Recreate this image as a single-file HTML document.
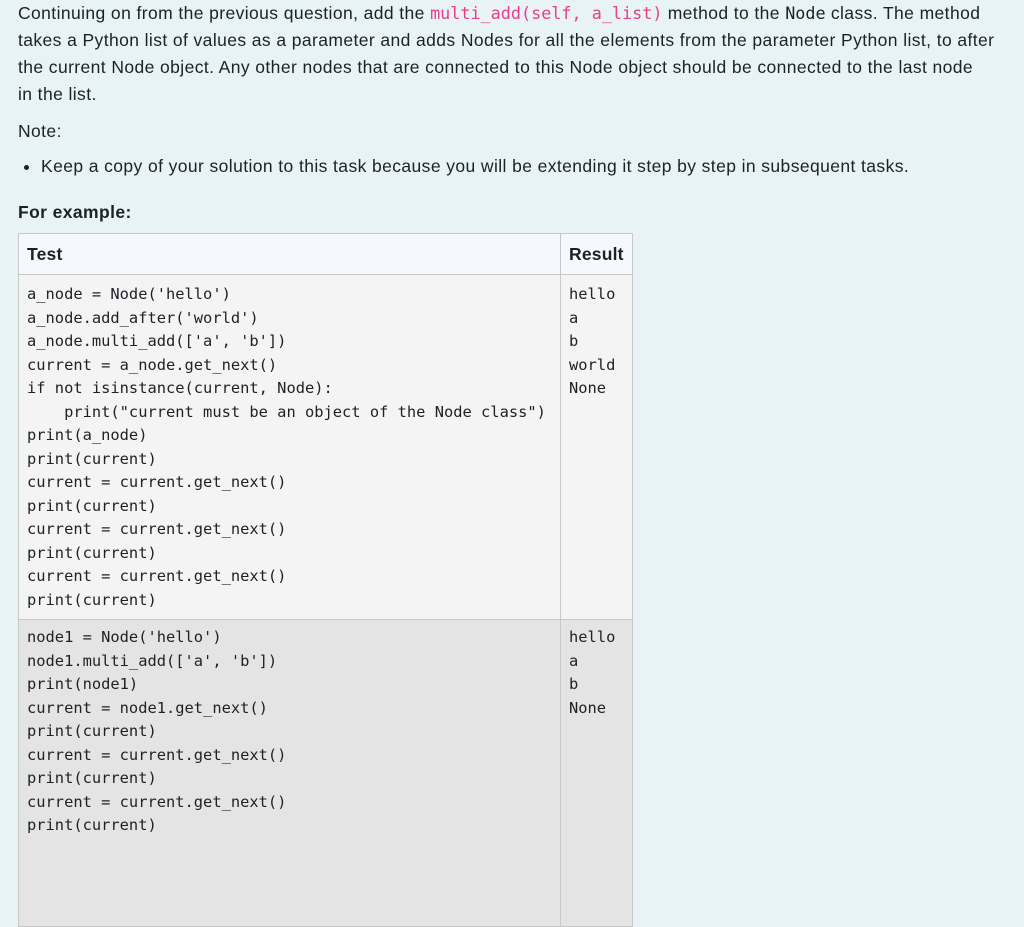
<!DOCTYPE html>
<html><head><meta charset="utf-8"><style>
html,body{margin:0;padding:0;background:#e7f3f5;width:1024px;height:833px;overflow:hidden}
body{font-family:"Liberation Sans",sans-serif;color:#1d2125;font-size:17.5px;letter-spacing:0.4px}
.w{position:absolute;left:18px;top:0;width:1006px;white-space:nowrap}
p{margin:0;line-height:27px}
code{font-family:"DejaVu Sans Mono",monospace;font-size:16.8px;color:#e83e8c;letter-spacing:0}
code.k{color:#1d2125}
ul{margin:0;padding-left:23px;line-height:27px}
table{position:absolute;left:18px;top:233px;border-collapse:collapse;letter-spacing:0}
td,th{border:1px solid #c8c8c8;vertical-align:top;text-align:left;padding:0 8px}
th{height:40px;font-weight:bold;font-size:17.5px;background:#f7f8fd;vertical-align:middle;letter-spacing:0.2px}
pre{margin:0;font-family:"DejaVu Sans Mono",monospace;font-size:15.4px;line-height:23.5px}
.r1 td{background:#f4f4f4;padding-top:8px;padding-bottom:7px}
.r2 td{background:#e4e4e4;padding-top:6px;height:300px}
</style></head><body>
<div class="w">
<p style="padding-top:0">Continuing on from the previous question, add the <code>multi_add(self, a_list)</code> method to the <code class="k">Node</code> class. The method<br>takes a Python list of values as a parameter and adds Nodes for all the elements from the parameter Python list, to after<br>the current Node object. Any other nodes that are connected to this Node object should be connected to the last node<br>in the list.</p>
<p style="margin-top:10px">Note:</p>
<ul style="margin-top:8px"><li>Keep a copy of your solution to this task because you will be extending it step by step in subsequent tasks.</li></ul>
<p style="margin-top:19px;font-weight:bold">For example:</p>
</div>
<table>
<tr><th style="width:525px">Test</th><th style="width:53px">Result</th></tr>
<tr class="r1"><td><pre>a_node = Node('hello')
a_node.add_after('world')
a_node.multi_add(['a', 'b'])
current = a_node.get_next()
if not isinstance(current, Node):
    print("current must be an object of the Node class")
print(a_node)
print(current)
current = current.get_next()
print(current)
current = current.get_next()
print(current)
current = current.get_next()
print(current)</pre></td><td><pre>hello
a
b
world
None</pre></td></tr>
<tr class="r2"><td><pre>node1 = Node('hello')
node1.multi_add(['a', 'b'])
print(node1)
current = node1.get_next()
print(current)
current = current.get_next()
print(current)
current = current.get_next()
print(current)</pre></td><td><pre>hello
a
b
None</pre></td></tr>
</table>
</body></html>
